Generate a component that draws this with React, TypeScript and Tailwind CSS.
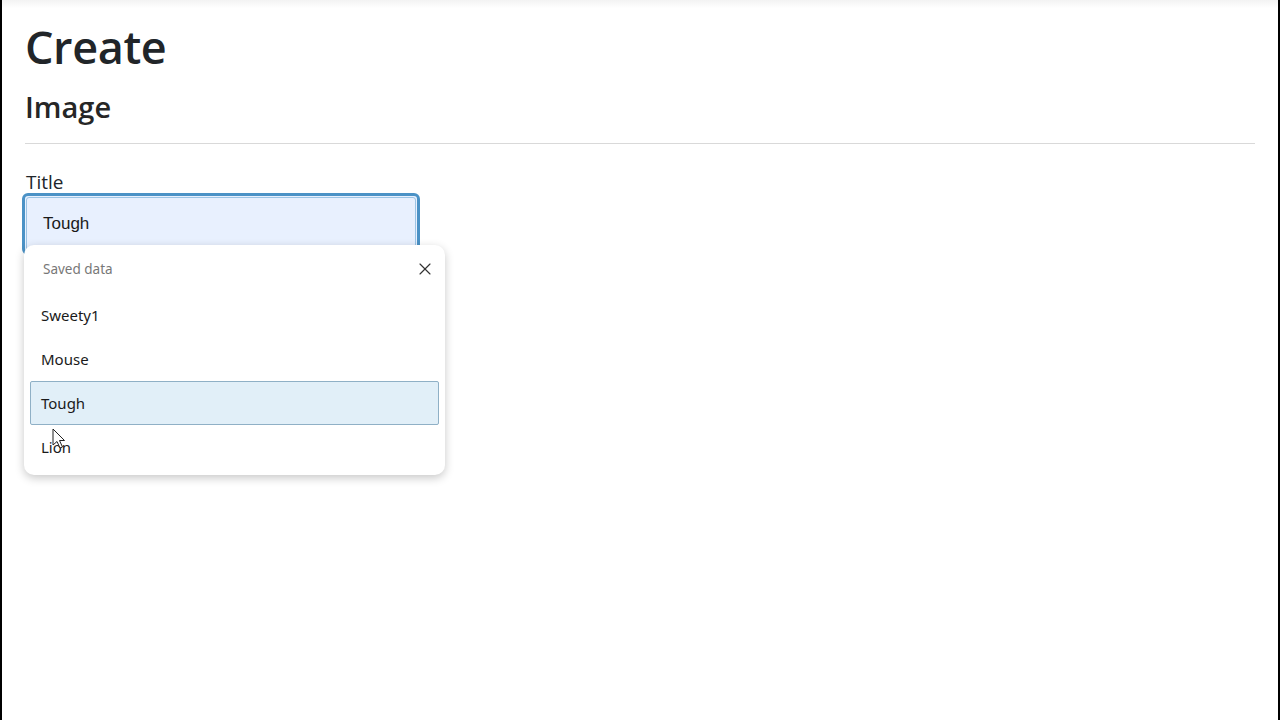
import { X } from 'lucide-react';

const items = ['Sweety1', 'Mouse', 'Tough', 'Lion'];

export default function App() {
  return (
    <div className="relative h-[720px] w-[1280px] overflow-hidden bg-white border-l-2 border-r-2 border-black font-['Open_Sans',sans-serif] text-[#212529]">
      <div className="h-[8px] bg-gradient-to-b from-[#f3f3f3] to-white" />
      <div className="pl-[23px] pr-[23px]">
        <h1 className="mt-[10px] text-[45px] font-semibold leading-[58px] tracking-[-0.4px]">Create</h1>
        <h4 className="mt-[13px] text-[29px] font-semibold leading-[36px] text-[#262626]">Image</h4>
        <hr className="mt-[18px] border-t border-[#d9d9d9]" />
        <div className="mt-[26px]">
          <label className="block text-[19px] leading-[24px] pl-[1px]">Title</label>
          <div className="relative ml-[-3px] mt-[-1px] w-[398px]">
            <div className="h-[62px] rounded-[6px] border-[3px] border-[#4b92c6] bg-[#e8f0fe] p-[1px]">
              <div className="flex h-full items-center rounded-[3px] border border-[#9cc4e4] pl-[16px] pb-[1px] font-['Liberation_Sans',sans-serif] text-[17px] text-[#1a1a1a]">
                Tough
              </div>
            </div>

            {/* autofill dropdown */}
            <div className="absolute left-[2px] top-[52px] w-[421px] rounded-[10px] bg-white pb-[6px] shadow-[0_3px_10px_rgba(0,0,0,0.22)] font-['Noto_Sans',sans-serif]">
              <div className="flex h-[48px] items-center justify-between pl-[19px] pr-[10px]">
                <span className="text-[13.5px] text-[#777]">Saved data</span>
                <X size={20} strokeWidth={1.4} className="text-[#333]" />
              </div>
              <div className="flex flex-col px-[6px]">
                {items.map((it) => (
                  <div
                    key={it}
                    className={
                      it === 'Tough'
                        ? 'flex h-[44px] items-center rounded-[2px] border border-[#8fb0c6] bg-[#e1eff8] pl-[10px] text-[15px] text-[#1a1a1a]'
                        : 'flex h-[44px] items-center pl-[11px] text-[15px] text-[#1a1a1a]'
                    }
                  >
                    {it}
                  </div>
                ))}
              </div>
            </div>

            {/* mouse pointer */}
            <svg className="absolute left-[30px] top-[235px]" width="16" height="22" viewBox="0 0 16 22">
              <path d="M1 1 L1 17 L5 13.5 L8 20 L10.5 19 L7.5 12.5 L12.5 12.5 Z" fill="white" stroke="#222" strokeWidth="1" strokeLinejoin="round" />
            </svg>
          </div>
        </div>
      </div>
    </div>
  );
}
